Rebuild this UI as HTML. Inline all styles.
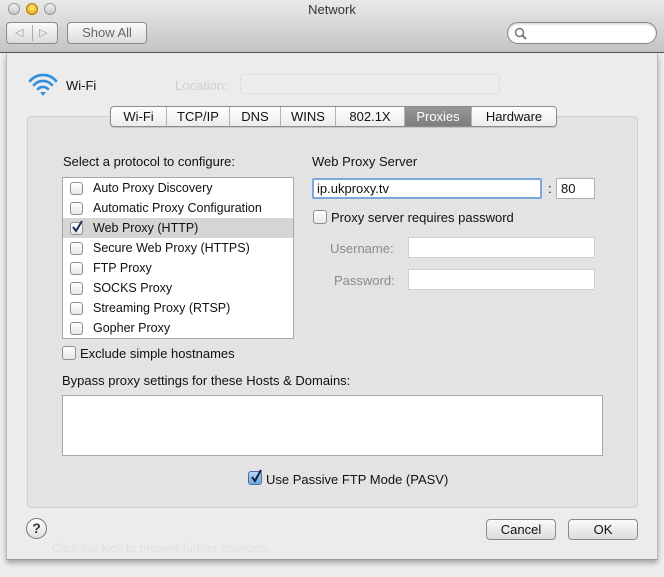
<!DOCTYPE html>
<html><head><style>
*{margin:0;padding:0;box-sizing:border-box}
body{width:664px;height:577px;background:#ededed;font-family:"Liberation Sans",sans-serif;font-size:12.5px;color:#111;position:relative;overflow:hidden}
.a{position:absolute}
.tb{left:0;top:0;width:664px;height:53px;background:linear-gradient(#e9e9e9,#c4c4c4);border-bottom:1px solid #555}
.light{width:12px;height:12px;border-radius:50%;border:1px solid #999;background:linear-gradient(#f4f4f4,#c8c8c8)}
.btn{border:1px solid #8a8a8a;border-radius:4px;background:linear-gradient(#fafafa,#dcdcdc)}
.sheet{left:6px;top:53px;width:652px;height:507px;background:#ececec;border-left:1px solid #bbb;border-right:1px solid #bbb;border-bottom:1px solid #999;box-shadow:0 3px 5px rgba(0,0,0,.3)}
.panel{left:27px;top:116px;width:611px;height:392px;background:#e3e3e3;border:1px solid #cfcfcf;border-radius:4px}
.tabs{left:110px;top:106px;height:21px;border:1px solid #8d8d8d;border-radius:4px;background:linear-gradient(#fff,#ececec);display:flex;overflow:hidden;box-shadow:0 1px 1px rgba(0,0,0,.15)}
.tabs div{height:19px;line-height:19px;text-align:center;border-right:1px solid #b5b5b5;font-size:13px}
.tabs div:last-child{border-right:0}
.cb{width:13px;height:13px;border:1px solid #8e8e8e;border-radius:3px;background:linear-gradient(#fff,#e6e6e6)}
.list{left:62px;top:177px;width:232px;height:162px;background:#fff;border:1px solid #a8a8a8}
.row{position:absolute;left:0;width:230px;height:20px;line-height:20px}
.row .cb{position:absolute;left:7px;top:4px}
.row span{position:absolute;left:30px;font-size:12.5px}
.fld{background:#fff;border:1px solid #b0b0b0}
.faint{color:#cfcfcf}
</style></head><body>
<div class="a tb"></div>
<div class="a light" style="left:8px;top:3px"></div>
<div class="a light" style="left:26px;top:3px;background:radial-gradient(circle at 50% 40%,#ffe680,#e8a000);border-color:#b07a00"></div>
<div class="a light" style="left:44px;top:3px"></div>
<div class="a" style="left:0;width:664px;top:2px;text-align:center;font-size:13px;color:#333">Network</div>
<div class="a btn" style="left:6px;top:22px;width:52px;height:22px"><span class="a" style="left:25px;top:2px;width:1px;height:16px;background:#aaa"></span><span class="a" style="left:8px;top:3px;color:#999;font-size:11px">◁</span><span class="a" style="left:32px;top:3px;color:#999;font-size:11px">▷</span></div>
<div class="a btn" style="left:67px;top:22px;width:80px;height:22px;text-align:center;line-height:20px;font-size:13px;color:#666">Show All</div>
<div class="a" style="left:507px;top:22px;width:150px;height:22px;border:1px solid #888;border-radius:11px;background:#fff;box-shadow:inset 0 1px 2px rgba(0,0,0,.2)"><svg class="a" style="left:6px;top:4px" width="14" height="14"><circle cx="5.5" cy="5.5" r="4" fill="none" stroke="#777" stroke-width="1.5"/><path d="M8.5 8.5L12 12" stroke="#777" stroke-width="2"/></svg></div>

<div class="a sheet"></div>
<svg class="a" style="left:27px;top:72px" width="32" height="28"><g fill="none" stroke="#2f8fe0" stroke-width="2.6" stroke-linecap="round"><path d="M3 9 A17 17 0 0 1 29 9"/><path d="M7 13 A12 12 0 0 1 25 13"/><path d="M11 17 A7 7 0 0 1 21 17"/></g><path d="M13 20 L16 24 L19 20 Z" fill="#2f8fe0"/></svg>
<div class="a" style="left:66px;top:78px;font-size:13px">Wi-Fi</div>
<div class="a faint" style="left:175px;top:78px;font-size:13px">Location:</div>
<div class="a" style="left:240px;top:74px;width:260px;height:20px;border:1px solid #e0e0e0;border-radius:3px"></div>

<div class="a panel"></div>
<div class="a tabs">
<div style="width:56px">Wi-Fi</div><div style="width:63px">TCP/IP</div><div style="width:51px">DNS</div><div style="width:55px">WINS</div><div style="width:69px">802.1X</div><div style="width:67px;background:linear-gradient(#979797,#7d7d7d);color:#fff">Proxies</div><div style="width:84px">Hardware</div>
</div>

<div class="a" style="left:63px;top:154px;font-size:13px">Select a protocol to configure:</div>
<div class="a list">
<div class="row" style="top:0"><div class="cb"></div><span>Auto Proxy Discovery</span></div>
<div class="row" style="top:20px"><div class="cb"></div><span>Automatic Proxy Configuration</span></div>
<div class="row" style="top:40px;background:#d5d5d5"><div class="cb"></div><span>Web Proxy (HTTP)</span><svg class="a" style="left:7px;top:2px" width="14" height="14"><path d="M3 7 L6 11 L12 1" fill="none" stroke="#1b2f5a" stroke-width="2"/></svg></div>
<div class="row" style="top:60px"><div class="cb"></div><span>Secure Web Proxy (HTTPS)</span></div>
<div class="row" style="top:80px"><div class="cb"></div><span>FTP Proxy</span></div>
<div class="row" style="top:100px"><div class="cb"></div><span>SOCKS Proxy</span></div>
<div class="row" style="top:120px"><div class="cb"></div><span>Streaming Proxy (RTSP)</span></div>
<div class="row" style="top:140px"><div class="cb"></div><span>Gopher Proxy</span></div>
</div>
<div class="a cb" style="left:62px;top:346px;width:14px;height:14px"></div>
<div class="a" style="left:80px;top:346px;font-size:13px">Exclude simple hostnames</div>

<div class="a" style="left:312px;top:154px;font-size:13px">Web Proxy Server</div>
<div class="a fld" style="left:312px;top:178px;width:230px;height:21px;border:2px solid #7ba7db;border-radius:2px;padding-left:3px;line-height:17px;font-size:13px">ip.ukproxy.tv</div>
<div class="a" style="left:548px;top:181px;font-size:13px">:</div>
<div class="a fld" style="left:556px;top:178px;width:39px;height:21px;padding-left:4px;line-height:19px;font-size:13px">80</div>
<div class="a cb" style="left:313px;top:210px;width:14px;height:14px"></div>
<div class="a" style="left:331px;top:210px;font-size:13px">Proxy server requires password</div>
<div class="a" style="left:330px;top:241px;font-size:13px;color:#8a8a8a">Username:</div>
<div class="a fld" style="left:408px;top:237px;width:187px;height:21px;border-color:#d0d0d0"></div>
<div class="a" style="left:334px;top:273px;font-size:13px;color:#8a8a8a">Password:</div>
<div class="a fld" style="left:408px;top:269px;width:187px;height:21px;border-color:#d0d0d0"></div>

<div class="a" style="left:62px;top:373px;font-size:13px">Bypass proxy settings for these Hosts &amp; Domains:</div>
<div class="a fld" style="left:62px;top:395px;width:541px;height:61px;border-color:#a8a8a8"></div>

<div class="a cb" style="left:248px;top:471px;width:14px;height:14px;background:linear-gradient(#bcd6f3,#6ea5e0);border-color:#4a6f9c"></div>
<svg class="a" style="left:249px;top:469px" width="14" height="15"><path d="M3 8 L6 12 L12 1" fill="none" stroke="#10213f" stroke-width="2"/></svg>
<div class="a" style="left:266px;top:472px;font-size:13px">Use Passive FTP Mode (PASV)</div>

<div class="a" style="left:26px;top:518px;width:21px;height:21px;border:1px solid #777;border-radius:50%;background:linear-gradient(#fff,#e0e0e0);text-align:center;line-height:19px;font-size:14px;font-weight:bold;color:#333">?</div>
<div class="a btn" style="left:486px;top:519px;width:70px;height:21px;text-align:center;line-height:19px;font-size:13px">Cancel</div>
<div class="a btn" style="left:568px;top:519px;width:70px;height:21px;text-align:center;line-height:19px;font-size:13px">OK</div>
<div class="a faint" style="left:52px;top:541px;font-size:12px;color:#e0e0e0">Click the lock to prevent further changes.</div>
</body></html>
